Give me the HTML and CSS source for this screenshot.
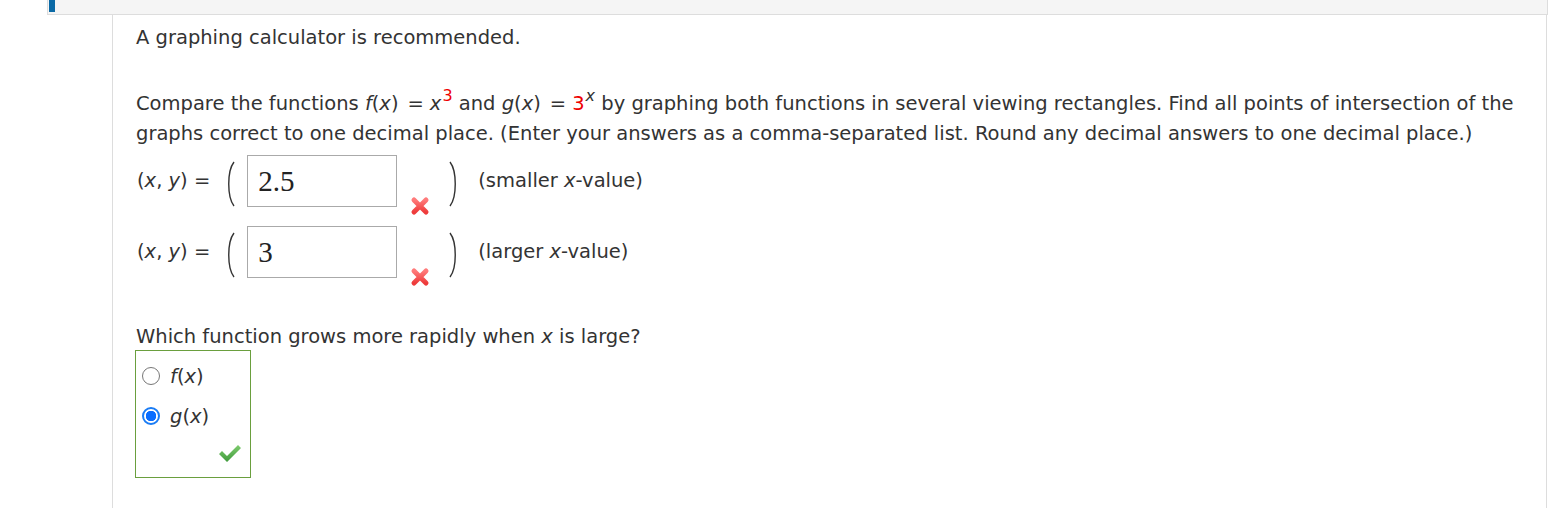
FILE: index.html
```html
<!DOCTYPE html>
<html>
<head>
<meta charset="utf-8">
<link rel="stylesheet" href="styles.css">
</head>
<body>
<div class="topbar"><div class="accent"></div></div>
<div class="panel">
  <p class="intro">A graphing calculator is recommended.</p>
  <p class="question">Compare the functions <i>f</i>(<i>x</i>)<span class="eq">=</span><i>x</i><sup class="red">3</sup> and <i>g</i>(<i>x</i>)<span class="eq">=</span><span class="red">3</span><sup><i>x</i></sup> by graphing both functions in several viewing rectangles. Find all points of intersection of the graphs correct to one decimal place. (Enter your answers as a comma-separated list. Round any decimal answers to one decimal place.)</p>

  <div class="ans-row">
    <span class="lbl">(<i>x</i>, <i>y</i>) =</span>
    <svg class="paren lp" viewBox="0 0 10 46" width="10" height="46"><path d="M9 1 C2 10 2 36 9 45" fill="none" stroke="#333" stroke-width="1.4"/></svg>
    <div class="box">2.5</div>
    <svg class="xmark" viewBox="0 0 20 20" width="20" height="20"><defs><linearGradient id="rg" x1="0" y1="0" x2="0" y2="1"><stop offset="0" stop-color="#ff7a7a"/><stop offset="1" stop-color="#ee3b3b"/></linearGradient></defs><path d="M4 4 L16 16 M16 4 L4 16" stroke="url(#rg)" stroke-width="5" stroke-linecap="round"/></svg>
    <svg class="paren rp" viewBox="0 0 10 46" width="10" height="46"><path d="M1 1 C8 10 8 36 1 45" fill="none" stroke="#333" stroke-width="1.4"/></svg>
    <span class="note">(smaller <i>x</i>-value)</span>
  </div>

  <div class="ans-row">
    <span class="lbl">(<i>x</i>, <i>y</i>) =</span>
    <svg class="paren lp" viewBox="0 0 10 46" width="10" height="46"><path d="M9 1 C2 10 2 36 9 45" fill="none" stroke="#333" stroke-width="1.4"/></svg>
    <div class="box">3</div>
    <svg class="xmark" viewBox="0 0 20 20" width="20" height="20"><path d="M4 4 L16 16 M16 4 L4 16" stroke="url(#rg)" stroke-width="5" stroke-linecap="round"/></svg>
    <svg class="paren rp" viewBox="0 0 10 46" width="10" height="46"><path d="M1 1 C8 10 8 36 1 45" fill="none" stroke="#333" stroke-width="1.4"/></svg>
    <span class="note">(larger <i>x</i>-value)</span>
  </div>

  <p class="which">Which function grows more rapidly when <i>x</i> is large?</p>
  <div class="choices">
    <div class="opt"><span class="radio"></span><span><i>f</i>(<i>x</i>)</span></div>
    <div class="opt"><span class="radio on"></span><span><i>g</i>(<i>x</i>)</span></div>
    <div class="check-row">
      <svg viewBox="0 0 24 19" width="24" height="19"><defs><linearGradient id="gg" x1="0" y1="0" x2="0" y2="1"><stop offset="0" stop-color="#7fcc6e"/><stop offset="1" stop-color="#3f9a3c"/></linearGradient></defs><path d="M1 10 L4 7 L9 12 L20 1 L23 4 L9 18 Z" fill="url(#gg)"/></svg>
    </div>
  </div>
</div>
</body>
</html>
```
FILE: styles.css
```css
html, body {
  margin: 0;
  padding: 0;
  background: #fff;
  height: 100%;
}
body {
  font-family: "DejaVu Sans", Verdana, sans-serif;
  font-size: 19.5px;
  color: #333;
  overflow: hidden;
}
.topbar {
  margin-left: 47px;
  width: 1499px;
  height: 14px;
  background: #f5f5f5;
  border-left: 1px solid #ddd;
  border-right: 1px solid #ddd;
  border-bottom: 1px solid #ddd;
  display: flex;
}
.accent {
  width: 6px;
  height: 12px;
  margin-left: 1px;
  background: #0b6aa6;
}
.panel {
  margin-left: 112px;
  width: 1410px;
  height: 493px;
  border-left: 1px solid #ddd;
  border-right: 1px solid #ddd;
  padding-left: 23px;
  padding-top: 11px;
  box-sizing: content-box;
}
.intro {
  margin: 0;
  line-height: 24px;
}
.question {
  margin: 39px 0 0;
  line-height: 30px;
}
.eq {
  margin: 0 6px 0 9px;
}
sup {
  font-size: 16px;
  line-height: 0;
  vertical-align: 9px;
  margin-left: 1px;
}
.red { color: #e00; }
.ans-row {
  display: flex;
  align-items: flex-start;
  height: 61px;
  margin-top: 6px;
}
.ans-row + .ans-row { margin-top: 10px; }
.lbl {
  line-height: 52px;
  padding-left: 1px;
}
.paren { flex: none; margin-top: 6px; }
.lp { margin-left: 15px; }
.box {
  margin-left: 12px;
  width: 150px;
  height: 52px;
  box-sizing: border-box;
  border: 1px solid #aaa;
  padding-left: 10px;
  font-family: "Liberation Serif", "DejaVu Serif", serif;
  font-size: 29px;
  line-height: 50px;
  color: #222;
}
.xmark { flex: none; margin-left: 13px; margin-top: 41px; }
.rp { margin-left: 19px; }
.note {
  margin-left: 19px;
  line-height: 52px;
}
.which {
  margin: 38px 0 0;
  line-height: 24px;
}
.choices {
  margin-top: 1px;
  margin-left: -1px;
  width: 114px;
  height: 121px;
  border: 1px solid #6a9f3e;
  padding-top: 5px;
  box-sizing: content-box;
}
.opt {
  display: flex;
  align-items: center;
  height: 40px;
  padding-left: 6px;
}
.radio {
  width: 18px;
  height: 18px;
  border: 1px solid #777;
  border-radius: 50%;
  margin-right: 10px;
  box-sizing: border-box;
  flex: none;
}
.radio.on {
  border: 2px solid #1a7cf5;
  background: radial-gradient(circle, #0a6dff 0 5px, #fff 5.5px);
}
.check-row {
  display: flex;
  justify-content: flex-end;
  padding-right: 8px;
  margin-top: 8px;
}
```
